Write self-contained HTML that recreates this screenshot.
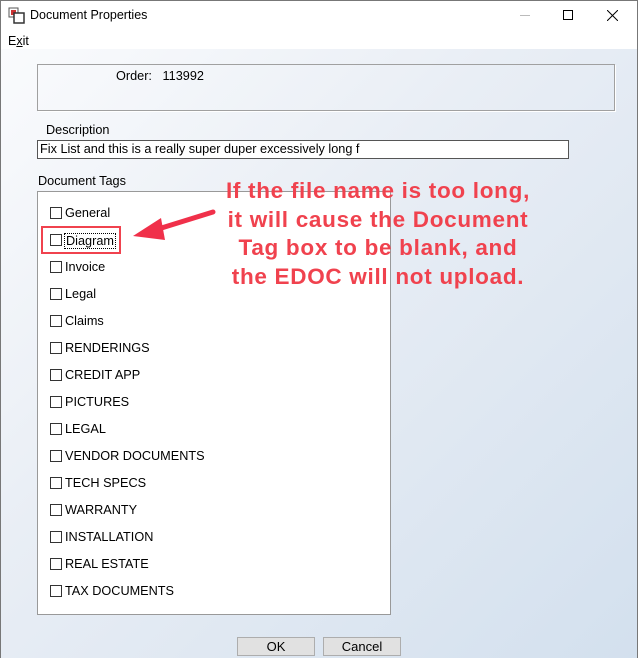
<!DOCTYPE html>
<html><head><style>
*{margin:0;padding:0;box-sizing:border-box}
body{width:638px;height:658px;overflow:hidden;font-family:"Liberation Sans",sans-serif;font-size:12.7px;color:#000;position:relative;background:#fff}
.win{position:absolute;left:0;top:0;width:638px;height:658px;border:1px solid #777;border-bottom:none}
.content{position:absolute;left:1px;top:49px;width:636px;height:609px;background:linear-gradient(135deg,#fafbfd 0%,#e9eef5 40%,#d3e0ee 100%)}
.abs{position:absolute}
.cb{position:absolute;left:50px;width:12px;height:12px;border:1px solid #333;background:#fff}
.lbl{position:absolute;left:65px;font-size:12.7px}
.red{position:absolute;left:190px;width:376px;text-align:center;color:#f0424e;font-weight:bold;font-size:22.5px;line-height:28.5px;top:177px;letter-spacing:0.7px}
.btn{position:absolute;top:637px;height:19px;background:#e1e1e1;border:1px solid #adadad;text-align:center;font-size:13px;line-height:17px}
</style></head><body>
<div class="win"></div>
<svg class="abs" style="left:8px;top:7px" width="18" height="18"><rect x="1" y="1" width="9" height="9" fill="#fff" stroke="#555"/><rect x="3" y="3" width="5" height="5" fill="#c33"/><rect x="6" y="6" width="10" height="10" fill="#fff" stroke="#333" stroke-width="1.5"/></svg>
<div class="abs" style="left:30px;top:8px;font-size:12.5px">Document Properties</div>
<div class="abs" style="left:520px;top:15px;width:10px;height:1px;background:#bbb"></div>
<div class="abs" style="left:563px;top:10px;width:10px;height:10px;border:1px solid #000"></div>
<svg class="abs" style="left:607px;top:10px" width="11" height="11"><path d="M0 0L11 11M11 0L0 11" stroke="#000" stroke-width="1"/></svg>
<div class="abs" style="left:8px;top:34px;font-size:12.5px">E<u>x</u>it</div>
<div class="content"></div>
<div class="abs" style="left:37px;top:64px;width:578px;height:47px;border:1px solid #a0a0a0;box-shadow:1px 1px 0 #fff"></div>
<div class="abs" style="left:116px;top:69px">Order:&nbsp;&nbsp; 113992</div>
<div class="abs" style="left:46px;top:123px">Description</div>
<div class="abs" style="left:37px;top:140px;width:532px;height:19px;background:#fff;border:1px solid #555;padding-left:2px;line-height:17px">Fix List and this is a really super duper excessively long f</div>
<div class="abs" style="left:38px;top:174px">Document Tags</div>
<div class="abs" style="left:37px;top:191px;width:354px;height:424px;background:#fff;border:1px solid #999"></div>
<div class="cb" style="top:207px"></div><div class="lbl" style="top:206px">General</div>
<div class="cb" style="top:234px"></div><div class="lbl" style="top:233px;border:1px dotted #000;padding:0 1px;left:64px">Diagram</div>
<div class="abs" style="left:41px;top:226px;width:80px;height:28px;border:2.5px solid #f0424e"></div>
<div class="cb" style="top:261px"></div><div class="lbl" style="top:260px">Invoice</div>
<div class="cb" style="top:288px"></div><div class="lbl" style="top:287px">Legal</div>
<div class="cb" style="top:315px"></div><div class="lbl" style="top:314px">Claims</div>
<div class="cb" style="top:342px"></div><div class="lbl" style="top:341px">RENDERINGS</div>
<div class="cb" style="top:369px"></div><div class="lbl" style="top:368px">CREDIT APP</div>
<div class="cb" style="top:396px"></div><div class="lbl" style="top:395px">PICTURES</div>
<div class="cb" style="top:423px"></div><div class="lbl" style="top:422px">LEGAL</div>
<div class="cb" style="top:450px"></div><div class="lbl" style="top:449px">VENDOR DOCUMENTS</div>
<div class="cb" style="top:477px"></div><div class="lbl" style="top:476px">TECH SPECS</div>
<div class="cb" style="top:504px"></div><div class="lbl" style="top:503px">WARRANTY</div>
<div class="cb" style="top:531px"></div><div class="lbl" style="top:530px">INSTALLATION</div>
<div class="cb" style="top:558px"></div><div class="lbl" style="top:557px">REAL ESTATE</div>
<div class="cb" style="top:585px"></div><div class="lbl" style="top:584px">TAX DOCUMENTS</div>
<svg class="abs" style="left:125px;top:200px" width="100" height="50"><path d="M88 12L30 30" stroke="#f0304a" stroke-width="5" stroke-linecap="round"/><path d="M8 36L36 18L40 40Z" fill="#f0304a"/></svg>
<div class="red">If the file name is too long,<br>it will cause the Document<br>Tag box to be blank, and<br>the EDOC will not upload.</div>
<div class="btn" style="left:237px;width:78px">OK</div>
<div class="btn" style="left:323px;width:78px">Cancel</div>
</body></html>
